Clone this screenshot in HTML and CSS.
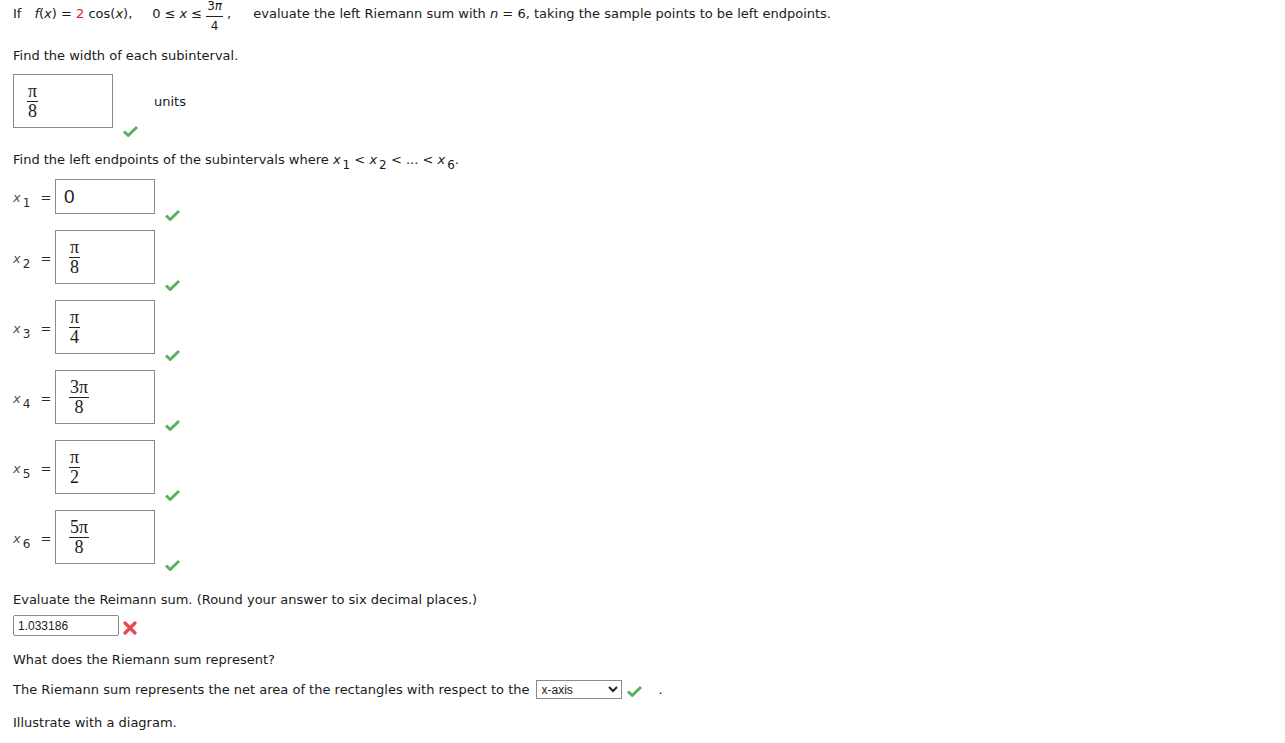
FILE: index.html
```html
<!DOCTYPE html>
<html lang="en">
<head>
    <meta charset="UTF-8">
    <link rel="stylesheet" href="styles.css">
    <title>Riemann Sum</title>
</head>
<body>
    <div class="page">
        <!-- Question statement -->
        <p class="intro">
            <span class="lead">If</span>
            <span class="gap1"><i>f</i>(<i>x</i>) = <span class="red">2</span> cos(<i>x</i>),</span>
            <span class="gap2">0 &le; <i>x</i> &le;
                <span class="frac small"><span class="num">3<i>&pi;</i></span><span class="den">4</span></span>,</span>
            <span class="gap3">evaluate the left Riemann sum with <i>n</i> = 6, taking the sample points to be left endpoints.</span>
        </p>

        <p class="line">Find the width of each subinterval.</p>

        <div class="width-row">
            <div class="box tall">
                <span class="frac"><span class="num">&pi;</span><span class="den">8</span></span>
            </div>
            <span class="check"><svg width="15" height="12" viewBox="0 0 15 12"><path d="M1 6.5 L5.2 10.5 L14 2" fill="none" stroke="#5cb05c" stroke-width="3" stroke-linejoin="round"/></svg></span>
            <span class="units">units</span>
        </div>

        <p class="line endpoints">Find the left endpoints of the subintervals where <i>x</i><sub>1</sub> &lt; <i>x</i><sub>2</sub> &lt; ... &lt; <i>x</i><sub>6</sub>.</p>

        <div class="points">
            <div class="point first">
                <span class="label"><i>x</i><sub>1</sub> <span class="eq">=</span></span>
                <div class="box short"><span class="zero">0</span></div>
                <span class="check"><svg width="15" height="12" viewBox="0 0 15 12"><path d="M1 6.5 L5.2 10.5 L14 2" fill="none" stroke="#5cb05c" stroke-width="3" stroke-linejoin="round"/></svg></span>
            </div>
            <div class="point">
                <span class="label"><i>x</i><sub>2</sub> <span class="eq">=</span></span>
                <div class="box tall"><span class="frac"><span class="num">&pi;</span><span class="den">8</span></span></div>
                <span class="check"><svg width="15" height="12" viewBox="0 0 15 12"><path d="M1 6.5 L5.2 10.5 L14 2" fill="none" stroke="#5cb05c" stroke-width="3" stroke-linejoin="round"/></svg></span>
            </div>
            <div class="point">
                <span class="label"><i>x</i><sub>3</sub> <span class="eq">=</span></span>
                <div class="box tall"><span class="frac"><span class="num">&pi;</span><span class="den">4</span></span></div>
                <span class="check"><svg width="15" height="12" viewBox="0 0 15 12"><path d="M1 6.5 L5.2 10.5 L14 2" fill="none" stroke="#5cb05c" stroke-width="3" stroke-linejoin="round"/></svg></span>
            </div>
            <div class="point">
                <span class="label"><i>x</i><sub>4</sub> <span class="eq">=</span></span>
                <div class="box tall"><span class="frac"><span class="num">3&pi;</span><span class="den">8</span></span></div>
                <span class="check"><svg width="15" height="12" viewBox="0 0 15 12"><path d="M1 6.5 L5.2 10.5 L14 2" fill="none" stroke="#5cb05c" stroke-width="3" stroke-linejoin="round"/></svg></span>
            </div>
            <div class="point">
                <span class="label"><i>x</i><sub>5</sub> <span class="eq">=</span></span>
                <div class="box tall"><span class="frac"><span class="num">&pi;</span><span class="den">2</span></span></div>
                <span class="check"><svg width="15" height="12" viewBox="0 0 15 12"><path d="M1 6.5 L5.2 10.5 L14 2" fill="none" stroke="#5cb05c" stroke-width="3" stroke-linejoin="round"/></svg></span>
            </div>
            <div class="point">
                <span class="label"><i>x</i><sub>6</sub> <span class="eq">=</span></span>
                <div class="box tall"><span class="frac"><span class="num">5&pi;</span><span class="den">8</span></span></div>
                <span class="check"><svg width="15" height="12" viewBox="0 0 15 12"><path d="M1 6.5 L5.2 10.5 L14 2" fill="none" stroke="#5cb05c" stroke-width="3" stroke-linejoin="round"/></svg></span>
            </div>
        </div>

        <p class="line evaluate">Evaluate the Reimann sum. (Round your answer to six decimal places.)</p>
        <div class="answer-row">
            <input type="text" class="answer" value="1.033186">
            <span class="cross"><svg width="14" height="14" viewBox="0 0 14 14"><path d="M2 2 L12 12 M12 2 L2 12" stroke="#e8474b" stroke-width="3.2" stroke-linecap="round"/></svg></span>
        </div>

        <p class="line represent">What does the Riemann sum represent?</p>
        <p class="line sentence">The Riemann sum represents the net area of the rectangles with respect to the
            <select class="axis"><option>x-axis</option></select>
            <span class="check inline"><svg width="15" height="12" viewBox="0 0 15 12"><path d="M1 6.5 L5.2 10.5 L14 2" fill="none" stroke="#5cb05c" stroke-width="3" stroke-linejoin="round"/></svg></span>
            <span class="dot">.</span>
        </p>
        <p class="line illustrate">Illustrate with a diagram.</p>
    </div>
</body>
</html>
```

FILE: styles.css
```css
body {
    margin: 0;
    background-color: #ffffff;
    font-family: "DejaVu Sans", Verdana, sans-serif;
    font-size: 13px;
    color: #1a1a1a;
}

.page {
    padding: 0 13px 5px;
}

p {
    margin: 0;
}

.red {
    color: #e0201b;
}

.intro {
    display: flex;
    align-items: center;
    height: 30px;
    white-space: nowrap;
}

.intro > span {
    margin-bottom: 4px;
}

.gap1 {
    margin-left: 13px;
}

.gap2 {
    margin-left: 20px;
    display: inline-flex;
    align-items: center;
    gap: 4px;
}

.gap3 {
    margin-left: 22px;
}

.frac {
    display: inline-flex;
    flex-direction: column;
    align-items: center;
    font-family: "Liberation Serif", "Times New Roman", serif;
    font-size: 18px;
    line-height: 17px;
}

.frac .num {
    border-bottom: 1px solid #222;
    padding: 0 1px 1px;
}

.frac .den {
    padding-top: 1px;
}

.frac.small {
    font-family: "DejaVu Sans", Verdana, sans-serif;
    font-size: 12px;
    line-height: 11px;
    margin-top: 6px;
}

.frac.small .num {
    padding: 0 1px 4px;
}

.frac.small .den {
    padding-top: 4px;
}

.line {
    line-height: 16px;
}

.intro + .line {
    margin-top: 18px;
}

.box {
    box-sizing: border-box;
    width: 100px;
    border: 1px solid #8a8a8a;
    display: flex;
    align-items: center;
    padding-left: 13px;
}

.box.tall {
    height: 54px;
}

.box.short {
    height: 35px;
    padding-left: 8px;
}

.zero {
    font-family: "Liberation Sans", Arial, sans-serif;
    font-size: 19px;
}

.width-row {
    display: flex;
    align-items: center;
    margin-top: 10px;
    height: 54px;
}

.width-row .check {
    align-self: flex-end;
    margin: 0 0 -9px 10px;
}

.units {
    margin-left: 16px;
}

.check {
    display: inline-flex;
    width: 15px;
    height: 12px;
}

.endpoints {
    margin-top: 24px;
}

.endpoints sub, .label sub {
    font-size: 12px;
    vertical-align: -5px;
    line-height: 0;
    margin-left: 2px;
}

.points {
    margin-top: 11px;
}

.point {
    display: flex;
    align-items: center;
    margin-bottom: 16px;
}

.label {
    width: 42px;
    padding-top: 2px;
    color: #2b2b2b;
}

.label i {
    color: #555;
}

.eq {
    margin-left: 6px;
}

.point .check {
    align-self: flex-end;
    margin: 0 0 -7px 10px;
}

.evaluate {
    margin-top: 28px;
}

.answer-row {
    display: flex;
    align-items: center;
    margin-top: 7px;
}

.answer {
    box-sizing: border-box;
    width: 106px;
    height: 21px;
    border: 1px solid #8a8a8a;
    border-radius: 2px;
    padding: 0 4px;
    font-family: "Liberation Sans", Arial, sans-serif;
    font-size: 12px;
    color: #222;
    margin: 0;
}

.cross {
    display: inline-flex;
    margin-left: 4px;
    margin-top: 4px;
}

.represent {
    margin-top: 16px;
}

.sentence {
    margin-top: 12px;
    display: flex;
    align-items: center;
    white-space: nowrap;
}

.axis {
    box-sizing: border-box;
    width: 86px;
    height: 19px;
    margin: 0 0 0 6px;
    border: 1px solid #8a8a8a;
    border-radius: 0;
    background: #fff;
    font-family: "Liberation Sans", Arial, sans-serif;
    font-size: 12px;
    padding: 0 1px;
    color: #222;
}

.check.inline {
    margin-left: 5px;
    margin-top: 2px;
}

.dot {
    margin-left: 17px;
}

.illustrate {
    margin-top: 16px;
}
```
